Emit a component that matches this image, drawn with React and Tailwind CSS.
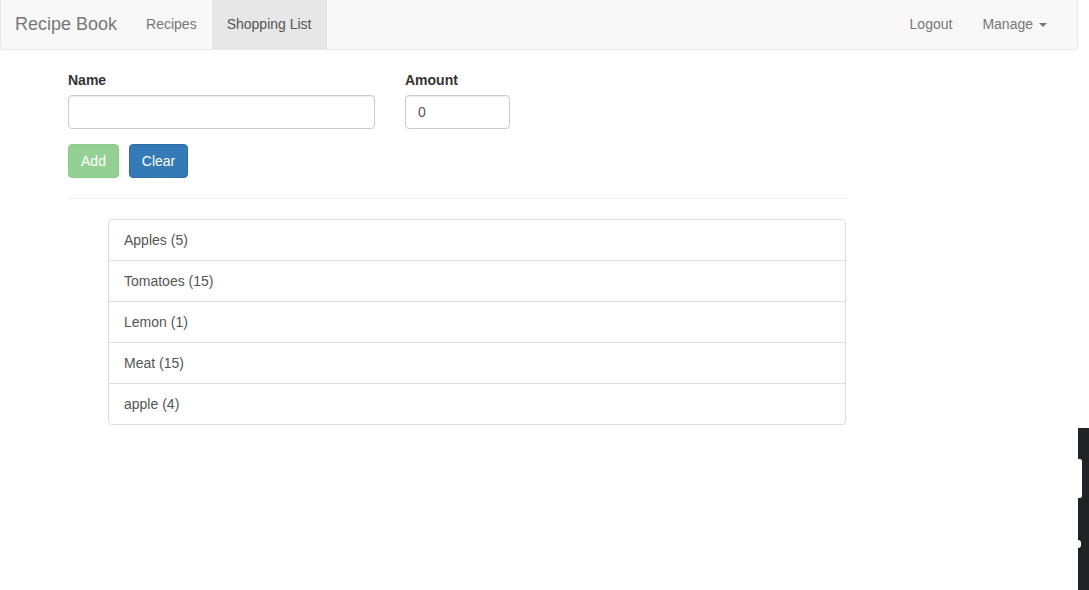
import React from "react";

const items = [
    { name: "Apples", amount: 5 },
    { name: "Tomatoes", amount: 15 },
    { name: "Lemon", amount: 1 },
    { name: "Meat", amount: 15 },
    { name: "apple", amount: 4 },
];

export default function App() {
    return (
        <div className="relative w-[1089px] h-[590px] bg-white text-[14px] leading-[20px] text-[#333] font-['Liberation_Sans',Arial,sans-serif] overflow-hidden">
            <div className="w-[1078px]">
                {/* navbar */}
                <nav className="h-[50px] bg-[#f8f8f8] border-x border-b border-[#e7e7e7] rounded-b-[4px] flex items-stretch justify-between pl-[14px] pr-[15px]">
                    <div className="flex items-stretch">
                        <a className="flex items-center pb-[1px] text-[18px] text-[#777] pr-[14px]">Recipe Book</a>
                        <a className="flex items-center pb-[1px] px-[15px] text-[#777]">Recipes</a>
                        <a className="flex items-center pb-[1px] px-[15px] text-[#555] bg-[#e7e7e7]">Shopping List</a>
                    </div>
                    <div className="flex items-stretch">
                        <a className="flex items-center pb-[1px] px-[15px] text-[#777]">Logout</a>
                        <a className="flex items-center pb-[1px] px-[15px] text-[#777]">
                            Manage
                            <span className="ml-[6px] mt-[2px] w-0 h-0 border-t-[4px] border-t-[#777] border-x-[4px] border-x-transparent"></span>
                        </a>
                    </div>
                </nav>

                {/* content */}
                <div className="pl-[68px] pt-[20px] w-[846px]">
                    <div className="flex gap-[30px]">
                        <div className="w-[307px]">
                            <label className="block font-bold mb-[5px]">Name</label>
                            <input
                                type="text"
                                className="block w-full h-[34px] px-[12px] border border-[#ccc] rounded-[4px] shadow-[inset_0_1px_1px_rgba(0,0,0,0.075)] outline-none"
                            />
                        </div>
                        <div className="w-[105px]">
                            <label className="block font-bold mb-[5px]">Amount</label>
                            <input
                                type="text"
                                defaultValue="0"
                                className="block w-full h-[34px] px-[12px] border border-[#ccc] rounded-[4px] text-[#555] shadow-[inset_0_1px_1px_rgba(0,0,0,0.075)] outline-none"
                            />
                        </div>
                    </div>
                    <div className="flex gap-[10px] mt-[15px]">
                        <button className="h-[34px] w-[51px] rounded-[4px] bg-[#5cb85c] border border-[#4cae4c] text-white opacity-65">
                            Add
                        </button>
                        <button className="h-[34px] w-[59px] rounded-[4px] bg-[#337ab7] border border-[#2e6da4] text-white">
                            Clear
                        </button>
                    </div>
                    <hr className="mt-[20px] mb-[20px] border-0 border-t border-[#eee]" />
                    <ul className="ml-[40px] border border-[#ddd] rounded-[4px] text-[#555]">
                        {items.map((item, i) => (
                            <li
                                key={i}
                                className={`px-[15px] py-[10px] ${i > 0 ? "border-t border-[#ddd]" : ""}`}
                            >
                                {item.name} ({item.amount})
                            </li>
                        ))}
                    </ul>
                </div>
            </div>

            {/* dark side widget */}
            <div className="absolute right-0 top-[428px] w-[11px] h-[162px] bg-[#222326]">
                <div className="absolute left-0 top-[31px] w-[4px] h-[39px] bg-white rounded-r-[2px]"></div>
                <div className="absolute left-0 top-[112px] w-[3px] h-[8px] bg-white rounded-r-full"></div>
            </div>
        </div>
    );
}
